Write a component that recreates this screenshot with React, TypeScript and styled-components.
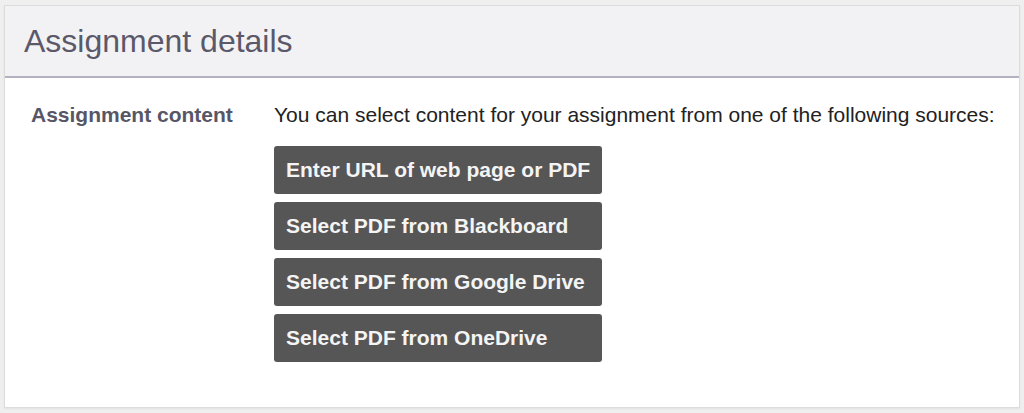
import React from "react";
import styled, { createGlobalStyle } from "styled-components";

const GlobalStyle = createGlobalStyle`
    html, body {
        margin: 0;
        padding: 0;
        background: #efefef;
        font-family: "Liberation Sans", Arial, sans-serif;
    }
`;

const Page = styled.div`
    padding: 5px 4px 5px 4px;
`;

const Panel = styled.section`
    background: #ffffff;
    border: 1px solid #dcdcdc;
    box-shadow: 0 1px 2px rgba(0, 0, 0, 0.06);
`;

const Header = styled.header`
    background: #f2f2f5;
    border-bottom: 2px solid #b4b2c0;
    height: 70px;
    display: flex;
    align-items: center;
    padding: 0 19px;
`;

const Title = styled.h2`
    margin: 0;
    font-weight: normal;
    font-size: 32px;
    color: #5b5969;
`;

const Body = styled.div`
    display: grid;
    grid-template-columns: 243px 1fr;
    padding: 24px 12px 45px 26px;
`;

const Label = styled.div`
    font-size: 21px;
    font-weight: bold;
    color: #575667;
    line-height: 26px;
`;

const Content = styled.div`
    display: flex;
    flex-direction: column;
    gap: 18px;
`;

const Intro = styled.p`
    margin: 0;
    font-size: 21px;
    line-height: 26px;
    color: #222222;
    white-space: nowrap;
`;

const ButtonStack = styled.div`
    display: flex;
    flex-direction: column;
    gap: 8px;
    width: fit-content;
`;

const SourceButton = styled.button`
    display: block;
    text-align: left;
    height: 48px;
    padding: 0 12px;
    background: #565656;
    color: #f4f4f4;
    font-family: "Liberation Sans", Arial, sans-serif;
    font-size: 21px;
    font-weight: bold;
    border: none;
    border-radius: 3px;
    cursor: pointer;
`;

const sources = [
    "Enter URL of web page or PDF",
    "Select PDF from Blackboard",
    "Select PDF from Google Drive",
    "Select PDF from OneDrive",
];

export default function App(): JSX.Element {
    return (
        <>
            <GlobalStyle />
            <Page>
                <Panel>
                    <Header>
                        <Title>Assignment details</Title>
                    </Header>
                    <Body>
                        <Label>Assignment content</Label>
                        <Content>
                            <Intro>
                                You can select content for your assignment from one of the
                                following sources:
                            </Intro>
                            <ButtonStack>
                                {sources.map((s) => (
                                    <SourceButton key={s}>{s}</SourceButton>
                                ))}
                            </ButtonStack>
                        </Content>
                    </Body>
                </Panel>
            </Page>
        </>
    );
}
